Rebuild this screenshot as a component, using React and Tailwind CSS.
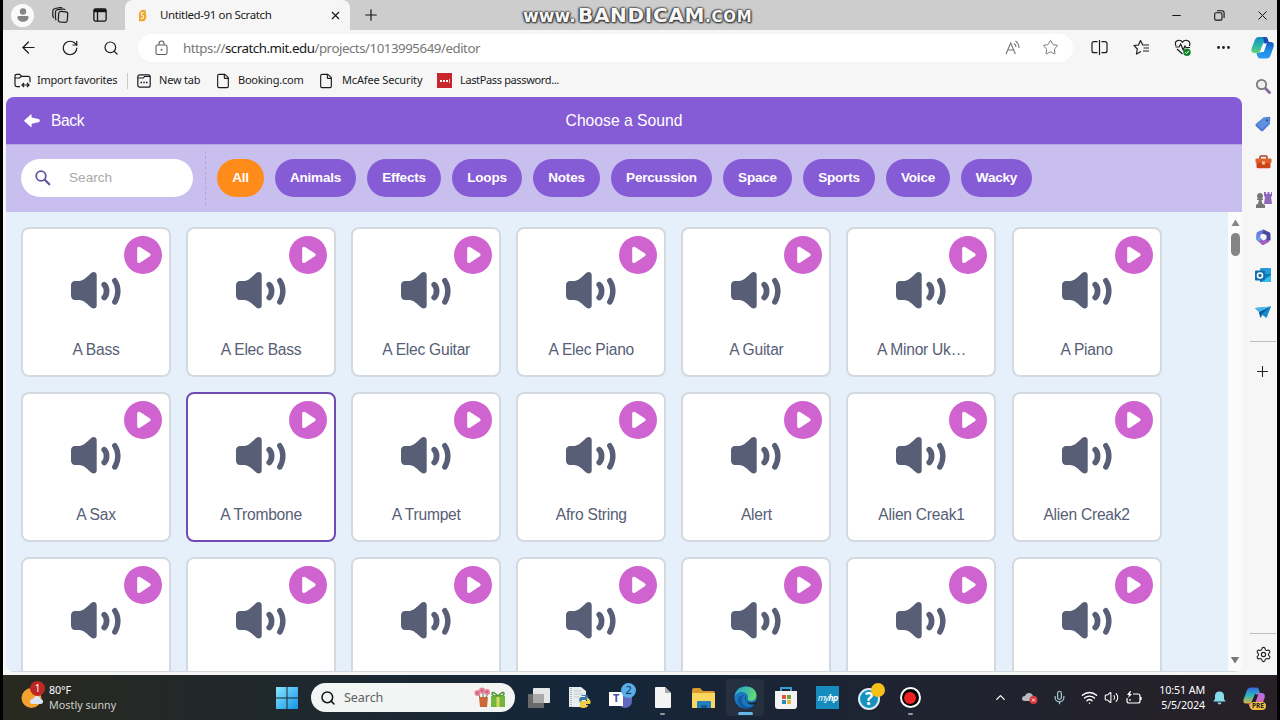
import { ArrowLeft, RotateCw, Search, Star, X, Plus, Minus, Ellipsis, Settings, ChevronUp, Mic, Wifi, Volume2, File } from 'lucide-react'

const categories = [
    { name: 'All', width: 'w-[47px]', active: true },
    { name: 'Animals', width: 'w-[81px]' },
    { name: 'Effects', width: 'w-[74px]' },
    { name: 'Loops', width: 'w-[70px]' },
    { name: 'Notes', width: 'w-[67px]' },
    { name: 'Percussion', width: 'w-[101px]' },
    { name: 'Space', width: 'w-[69px]' },
    { name: 'Sports', width: 'w-[72px]' },
    { name: 'Voice', width: 'w-[64px]' },
    { name: 'Wacky', width: 'w-[71px]' },
]

const sounds = [
    'A Bass', 'A Elec Bass', 'A Elec Guitar', 'A Elec Piano', 'A Guitar', 'A Minor Uk…', 'A Piano',
    'A Sax', 'A Trombone', 'A Trumpet', 'Afro String', 'Alert', 'Alien Creak1', 'Alien Creak2',
    '', '', '', '', '', '', '',
]

function Slot({ children, className = 'w-[41.3px]' }) {
    return <div className={`flex shrink-0 items-center justify-center ${className}`}>{children}</div>
}

function TabStrip() {
    return (
        <div className="flex h-[30px] shrink-0 bg-[#cdcdcd]">
            <div className="flex w-[122px] shrink-0 items-center">
                <div className="ml-2 flex h-[23px] w-[23px] items-center justify-center rounded-full bg-[#fafafa]">
                    <svg width="12" height="14" viewBox="0 0 12 14" fill="#858585">
                        <circle cx="6" cy="3.5" r="3.2" />
                        <path d="M1.5 8h9q1 0 1 1.2C11.5 12 9 13.7 6 13.7S.5 12 .5 9.2Q.5 8 1.5 8" />
                    </svg>
                </div>
                <svg className="ml-[18px]" width="17" height="17" viewBox="0 0 17 17" fill="none" stroke="#1c1c1c" strokeWidth="1.2">
                    <rect x="6.5" y="4.6" width="9" height="10.6" rx="2" transform="rotate(4 11 10)" />
                    <path d="M4.3 13.2Q3.5 12.5 3.5 11V5q0-2 2-2.3l6-.7q1 0 1.7.8M1.8 11Q.8 10 .8 8.6V4q0-2 2.2-2.5l5.5-1q1 0 1.6.6" />
                </svg>
                <svg className="ml-[24px]" width="14" height="14" viewBox="0 0 14 14" fill="none" stroke="#111" strokeWidth="1.3">
                    <rect x=".9" y=".9" width="12.2" height="12.2" rx="1.5" />
                    <path d="M1 2.7h12" strokeWidth="3" />
                    <path d="M4.5 3v10" />
                </svg>
            </div>
            <div className="flex w-[225px] shrink-0 items-center rounded-t-lg bg-[#f6f6f6]">
                <svg className="ml-[13px]" width="9" height="13" viewBox="0 0 9 13">
                    <path d="M3 1.5Q5 0 7.8 1.4V5Q9 6 8 9.4 7 12.6 3.5 12.3H1V8.4Q0 4 3 1.5" fill="#eda62f" />
                    <path d="M6 4Q3.5 2.6 3.2 5q0 1.2 1.8 1.7Q6.3 8 4.8 9.3 3.8 10 2.8 9" fill="none" stroke="#fff1d0" strokeWidth="1.2" />
                </svg>
                <span className="ml-[13px] w-[160px] text-[11.5px] tracking-[-0.38px] whitespace-nowrap text-[#1b1b1b]">Untitled-91 on Scratch</span>
                <X className="ml-[9px] text-[#111]" size={13} strokeWidth={2} />
            </div>
            <Slot className="w-[41px]"><Plus className="text-[#161616]" size={18} strokeWidth={1.6} /></Slot>
            {/* Recorder watermark */}
            <div className="ml-[132px] flex w-[232px] items-baseline font-['DejaVu_Sans'] leading-[31px] font-bold whitespace-nowrap text-[#f7f7f7] [text-shadow:0_0_2px_#333,0_0_2px_#333,1px_1px_2px_#333,-1px_0_2px_#333]">
                <span className="w-[55px] text-[17px] tracking-[0.1px]">www.</span>
                <span className="w-[127px] text-[20px] tracking-[0.7px]">BANDICAM</span>
                <span className="text-[15px] tracking-[0.8px]">.COM</span>
            </div>
            <div className="ml-auto flex items-center text-[#151515]">
                <Slot className="w-[43px]"><Minus size={13} strokeWidth={2} /></Slot>
                <Slot className="w-[43px]">
                    <svg width="11" height="11" viewBox="0 0 11 11" fill="none" stroke="currentColor" strokeWidth="1.1">
                        <rect x=".7" y="2.8" width="7.3" height="7.3" rx="1.3" />
                        <path d="M3 .8h5q2.1 0 2.1 2.1V8" />
                    </svg>
                </Slot>
                <Slot className="mr-[7px] ml-[14px] w-[15px]"><X className="shrink-0" size={15} strokeWidth={1.6} /></Slot>
            </div>
        </div>
    )
}

function CopilotLogo({ size = 23 }) {
    return (
        <svg width={size} height={size} viewBox="0 0 23 23">
            <defs>
                <linearGradient id="copA" x2="0" y2="1"><stop stopColor="#1687c9" /><stop offset=".55" stopColor="#28b7aa" /><stop offset="1" stopColor="#68d06f" /></linearGradient>
                <linearGradient id="copB" x2="0" y2="1"><stop stopColor="#1e56bd" /><stop offset=".5" stopColor="#1b8de8" /><stop offset="1" stopColor="#2e9cf0" /></linearGradient>
            </defs>
            <path d="M7.5 1H14q2 0 2.6 2l1 4-5.6.5-3.5 9.5H3.5Q-.5 17 .6 12.5L4 3.5Q5 1 7.5 1" fill="url(#copA)" />
            <path d="M13.5 6H19.5q4 0 3.2 4.5l-3 8.5q-1 3.500-4.5 3.500H9q-2 0-2.8-3L5.5 17h3q1.5 0 2-2z" fill="url(#copB)" />
            <path d="M12.5 7.5h3.3l-3 8.5H9.3z" fill="#f5fbff" />
            <path d="M12 1h3q1.300.3 1.8 2l.9 3.2h-4.5z" fill="#174bae" />
        </svg>
    )
}

function Toolbar() {
    return (
        <div className="flex h-[35px] shrink-0 items-center pl-[5px] text-[#1c1c1c]">
            <Slot><ArrowLeft size={19} strokeWidth={1.5} /></Slot>
            <Slot><RotateCw size={18} strokeWidth={1.6} /></Slot>
            <Slot><Search size={16} strokeWidth={1.8} /></Slot>
            <div className="ml-[6px] flex h-[28px] w-[935px] items-center rounded-full bg-white">
                <svg className="ml-[17px]" width="13" height="16" viewBox="0 0 13 16" fill="none" stroke="#606060" strokeWidth="1.1">
                    <rect x="1" y="5" width="11" height="9.5" rx="1.5" />
                    <path d="M4 5V3.5Q4 1 6.5 1T9 3.5V5" />
                    <circle cx="6.5" cy="9.7" r=".4" />
                </svg>
                <span className="ml-[15px] pt-[2px] text-[13.3px] tracking-[-0.47px] whitespace-nowrap text-[#777]">https://<span className="text-[#161616]">scratch.mit.edu</span>/projects/1013995649/editor</span>
                <svg className="mr-[21px] ml-auto" width="16" height="16" viewBox="0 0 16 16" fill="none" stroke="#777" strokeWidth="1.1">
                    <path d="M1 14 5.7 3 10.4 14M2.7 10h6M9 3.5Q11 5 11 7M10.5 1Q14 3.5 14 8" />
                </svg>
                <Star className="mr-[14px] text-[#777]" size={17} strokeWidth={1.4} />
            </div>
            <Slot className="ml-[6px] w-[42px]">
                <svg width="17" height="17" viewBox="0 0 17 17" fill="none" stroke="currentColor" strokeWidth="1.2">
                    <path d="M6.5 2.7H3q-2 0-2 2v7q0 2 2 2h3.5M10.5 2.7H14q2 0 2 2v7q0 2-2 2h-3.5M8.5 1v15" />
                </svg>
            </Slot>
            <Slot className="w-[42px]">
                <svg width="17" height="17" viewBox="0 0 17 17" fill="none" stroke="currentColor" strokeWidth="1.2">
                    <path d="M8 12.5 3.5 15l.8-5L1 6.7l4.5-.7 2-4.5L9.8 6H16M10.5 9H16M10 12h6" strokeLinejoin="round" />
                </svg>
            </Slot>
            <Slot className="w-[41px]">
                <svg width="18" height="18" viewBox="0 0 18 18" fill="none" stroke="currentColor" strokeWidth="1.2">
                    <path d="M2 7Q0 2 4.5 1.3 7 1 8.5 3.2 10 1 12.5 1.3 17 2 15.5 7M1.5 8H5l1.7-3 2.5 6L11 7l1 1.5h4M3 10l5.5 5" />
                    <circle cx="13" cy="13.2" r="3.7" fill="#11842b" stroke="none" />
                    <path d="m11.2 13.3 1.3 1.2 2.3-2.6" stroke="#fff" strokeWidth="1" />
                </svg>
            </Slot>
            <Slot className="w-[40px]"><Ellipsis size={17} strokeWidth={2} /></Slot>
            <Slot className="ml-auto w-[29px]"><CopilotLogo /></Slot>
        </div>
    )
}

function Bookmarks() {
    return (
        <div className="flex h-[32px] shrink-0 items-center pb-px pl-[11px] text-[11px] tracking-[-0.22px] whitespace-nowrap text-[#1b1b1b]">
            <svg width="17" height="16" viewBox="0 0 17 16" fill="none" stroke="currentColor" strokeWidth="1.2">
                <path d="M6 13.7H3q-2 0-2-2V3q0-1.7 1.7-1.7h3l2 2H14q2 0 2 2v4M1 5h4.5l2-1.7M8 12h7M10 10l-2 2 2 2M13 10l2 2-2 2" />
            </svg>
            <span className="ml-[6px] w-[90px]">Import favorites</span>
            <div className="h-[16px] w-px bg-[#c9c9c9]" />
            <svg className="ml-[9px]" width="14" height="14" viewBox="0 0 14 14" fill="none" stroke="currentColor" strokeWidth="1.2">
                <rect x=".8" y=".8" width="12.4" height="12.4" rx="2" />
                <path d="M1 4h5.5l1-1.5h5.5" />
                <path d="M3.5 8.5h1.5M6.3 8.5h1.5M9 8.5h1.5" strokeWidth="1.7" />
            </svg>
            <span className="ml-[8px] w-[56px]">New tab</span>
            <File size={16} strokeWidth={1.7} />
            <span className="ml-[7px] w-[80px]">Booking.com</span>
            <File size={16} strokeWidth={1.7} />
            <span className="ml-[8px] w-[95px] tracking-[-0.15px]">McAfee Security</span>
            <div className="flex h-[15px] w-[15px] items-center justify-center gap-[1px] bg-[#c9252b]">
                <i className="h-[2px] w-[2px] bg-white" /><i className="h-[2px] w-[2px] bg-white" /><i className="h-[2px] w-[2px] bg-white" /><i className="h-[4px] w-px bg-white/70" />
            </div>
            <span className="ml-[8px] tracking-[-0.36px]">LastPass password...</span>
        </div>
    )
}

function SoundCard({ name, active }) {
    return (
        <div className={`relative flex h-[150px] flex-col items-center rounded-lg border-2 bg-white ${active ? 'border-[#714bb4]' : 'border-[#d4d9df]'}`}>
            <svg className="mt-[43px] shrink-0" width="50" height="37" viewBox="0 0 50 37">
                <path d="M4 9h4c5 0 8.5-5 12.5-8.2 2.2-1.6 5.2-.5 5.2 2.2v30.5c0 2.7-3 3.8-5.2 2.2C16.5 32.5 13 28 8 28H4c-2.5 0-4-2-4-4.5V13c0-2 1.5-4 4-4" fill="#575e75" />
                <path d="M33.3 12.8C36.3 15.5 36.3 22.5 33.3 25.500" fill="none" stroke="#575e75" strokeWidth="5.8" strokeLinecap="round" />
                <path d="M43.8 8.7C47.900 14.500 47.900 23.500 43.800 30" fill="none" stroke="#575e75" strokeWidth="5.4" strokeLinecap="round" />
            </svg>
            <span className="mt-[31px] text-[15.6px] leading-5 tracking-[-0.25px] text-[#575e75]">{name}</span>
            <div className="absolute top-[7px] right-[7px] flex h-[38px] w-[38px] items-center justify-center rounded-full bg-[#cf63cf]">
                <svg className="ml-px" width="16" height="18" viewBox="0 0 16 18" fill="#fff">
                    <path d="M1.2 2.5C1.2 1 2.5.2 4 1l9.7 6.2q2 1.5 0 3L4 16.7c-1.5.9-2.8 0-2.8-1.5z" />
                </svg>
            </div>
        </div>
    )
}

function SoundLibrary() {
    return (
        <div className="mr-[1px] ml-[3px] flex h-[575px] flex-col overflow-hidden rounded-lg bg-[#e6f0fa] font-['Liberation_Sans',sans-serif]">
            <div className="relative flex h-[47px] shrink-0 items-center bg-[#855cd6] text-white">
                <svg className="ml-[18px]" width="16" height="14" viewBox="0 0 16 14">
                    <path d="M.4 6.3 6.8.4q.8-.5.8.5v2.7l7 1.5q1.2.3 1.2 1.6t-1.2 1.6l-7 1.5v2.7q0 1-.8.5L.4 7.3Q0 6.8.4 6.3" fill="#fff" />
                </svg>
                <span className="ml-[11px] pt-px text-[15.6px] tracking-[-0.35px]">Back</span>
                <span className="absolute inset-x-0 text-center text-[15.7px]">Choose a Sound</span>
            </div>
            <div className="flex h-[68px] shrink-0 items-center border-t border-[#b8a6e4] bg-[#c8bfee] pb-[2px] pl-[15px]">
                <div className="flex h-[38px] w-[172px] items-center rounded-full bg-white">
                    <svg className="ml-[14px]" width="16" height="16" viewBox="0 0 16 16" fill="none" stroke="#65549f" strokeLinecap="round">
                        <circle cx="6" cy="6" r="4.8" strokeWidth="1.8" />
                        <path d="m9.8 9.8 4.5 4.5" strokeWidth="2.2" />
                    </svg>
                    <span className="ml-[18px] pt-[2px] text-[13.6px] text-[#aaa]">Search</span>
                </div>
                <div className="ml-[12px] h-[54px] border-l border-dashed border-[#b2a4dc]" />
                <div className="ml-[11px] flex gap-[11px]">
                    {categories.map((c) => (
                        <div key={c.name} className={`flex h-[38px] items-center justify-center rounded-full pt-[2px] text-[13.5px] font-bold tracking-[-0.2px] text-white ${c.width} ${c.active ? 'bg-[#ff8c1a]' : 'bg-[#855cd6]'}`}>
                            {c.name}
                        </div>
                    ))}
                </div>
            </div>
            <div className="flex min-h-0 flex-1 border-b border-[#d5d9de]">
                <div className="grid flex-1 grid-cols-[repeat(7,150px)] content-start gap-x-[15.1px] gap-y-[15px] overflow-hidden pt-[15px] pl-[15px]">
                    {sounds.map((name, i) => <SoundCard key={i} name={name} active={i === 8} />)}
                </div>
                <div className="flex w-[14px] flex-col items-center bg-[#fbfbfb] pt-[7px] pb-[7px]">
                    <svg width="9" height="8" viewBox="0 0 9 8"><path d="M4.5.5 8.5 7h-8z" fill="#858585" /></svg>
                    <div className="mt-[6px] h-[23px] w-[9px] rounded-full bg-[#858585]" />
                    <svg className="mt-auto" width="10" height="8" viewBox="0 0 9 8"><path d="M4.5 7.5 8.7 1H.3z" fill="#777" /></svg>
                </div>
            </div>
        </div>
    )
}

function Sidebar() {
    return (
        <div className="flex w-[34px] shrink-0 flex-col items-center pt-[3px] pl-[6px]">
            <Slot className="h-[37.6px]">
                <svg width="17" height="17" viewBox="0 0 17 17" fill="none"><path d="m10 10 4.5 4.5" stroke="#8570a8" strokeWidth="3" strokeLinecap="round" /><circle cx="6.5" cy="6.5" r="4.7" fill="#eceef2" stroke="#777" strokeWidth="1.7" /></svg>
            </Slot>
            <Slot className="h-[37.6px]">
                <svg width="16" height="16" viewBox="0 0 16 16"><path d="M8.5 1.5 14 .8q1.3 0 1.3 1.3l-.5 6L8 15q-1 .8-2 0L.8 10q-.8-1 0-2z" fill="#4b7bd0" /><path d="m8.5 2.5 5-.7q1 0 .8 1l-.5 4.5L7 13 2 8.5z" fill="#6090df" /><circle cx="12" cy="4.3" r="1" fill="#243e70" /></svg>
            </Slot>
            <Slot className="h-[37.6px]">
                <svg width="17" height="14" viewBox="0 0 17 14"><path d="M5 4V2q0-1 1-1h5q1 0 1 1v2" fill="none" stroke="#a63e20" strokeWidth="1.5" /><rect x=".5" y="3.5" width="16" height="4.5" rx="1" fill="#e0602c" /><path d="M1.5 8h14v4q0 1.3-1.5 1.3H3q-1.5 0-1.5-1.3z" fill="#ca4319" /><rect x="7.2" y="6.5" width="2.6" height="3" fill="#ffd1a0" /></svg>
            </Slot>
            <Slot className="h-[37.6px]">
                <svg width="17" height="18" viewBox="0 0 17 18"><path d="M9 1h2v2h1.5V1h2v2H16V1h1v4l-1 1 1 7H9l1-7-1-1z" fill="#8f68bc" /><path d="M1 17v-3l2-1.5L4 9H2V7.5h1.5a3 3 0 1 1 3 0H8V9H6.5l.8 3.5L10 14v3z" fill="#777" /></svg>
            </Slot>
            <Slot className="h-[37.6px]">
                <svg width="17" height="18" viewBox="0 0 17 18" fill="none" strokeWidth="4" strokeLinejoin="round"><path d="M9.5 3 3.5 5.500 3 11" stroke="#6d7bdc" /><path d="m2.500 10 5.500 5 5.500-3" stroke="#a060c4" /><path d="m8 3.500 5.500 2.500v6.500" stroke="#474a9c" /><path d="m2.500 9.500 2.500 3" stroke="#62a5e8" /></svg>
            </Slot>
            <Slot className="h-[37.6px]">
                <svg width="16" height="16" viewBox="0 0 16 16"><rect x="5" y="1" width="11" height="13" rx="1" fill="#269bd7" /><path d="M5 7h11v8H5z" fill="#087bb9" /><path d="m7 14 9-6v7H7z" fill="#39bce9" /><rect y="3.5" width="10" height="10" rx="1" fill="#126da9" /><circle cx="5" cy="8.5" r="2.5" fill="none" stroke="#fff" strokeWidth="1.6" /></svg>
            </Slot>
            <Slot className="h-[37.6px]">
                <svg width="16" height="13" viewBox="0 0 16 13"><path d="M0 2 16 .5 11.5 12 7.5 9 5.5 12 4 6z" fill="#168bca" /><path d="M4 6 16 .5 6.5 8l-1 4z" fill="#095a96" /><path d="M0 2 16 .5 4 6z" fill="#49b5e5" /></svg>
            </Slot>
            <div className="mt-[10px] h-px w-[26px] bg-[#bdbdbd]" />
            <Plus className="mt-[21px] mr-px text-[#222]" size={17} strokeWidth={1.5} />
            <div className="mt-auto h-px w-[26px] bg-[#bdbdbd]" />
            <Settings className="mt-[12px] mb-[12px] text-[#222]" size={17} strokeWidth={1.6} />
        </div>
    )
}

function Taskbar() {
    return (
        <div className="flex h-[45px] shrink-0 items-center bg-linear-to-r from-[#29291f] via-[#14263a] via-45% to-[#272027] text-white">
            <div className="relative ml-[18px] h-[30px] w-[28px] shrink-0">
                <svg width="24" height="28" viewBox="0 0 24 28"><circle cx="10.5" cy="15" r="10" fill="#f3a12f" /><path d="M12 21q-3 0-3-2.5T12 16q1-3 4-3t3.5 3Q22 16 22 18.5T19.5 21z" fill="#dce5f5" /></svg>
                <div className="absolute -top-[2px] left-[9px] flex h-[15px] w-[15px] items-center justify-center rounded-full bg-[#bd2823] text-[10px]">1</div>
            </div>
            <div className="w-[224px] shrink-0 text-[10.7px] leading-[15px] whitespace-nowrap">
                <div className="tracking-[-0.1px]">80°F</div>
                <div className="tracking-[0.06px] text-[#d0d0cb]">Mostly sunny</div>
            </div>
            <svg className="ml-[3px] shrink-0" width="22" height="22" viewBox="0 0 22 22"><defs><linearGradient id="win" x2="1" y2="1"><stop stopColor="#87e5ff" /><stop offset="1" stopColor="#1694e5" /></linearGradient></defs><path d="M0 0h10.5v10.5H0zM11.5 0H22v10.5H11.5zM0 11.5h10.5V22H0zM11.5 11.5H22V22H11.5z" fill="url(#win)" /></svg>
            <div className="ml-[13px] flex h-[29px] w-[204px] shrink-0 items-center rounded-full bg-[#f3f5f5]">
                <Search className="ml-[9px] text-[#161616]" size={16} strokeWidth={2.3} />
                <span className="ml-[8px] pt-px text-[12.6px] tracking-[-0.1px] text-[#606060]">Search</span>
                <svg className="mr-[9px] ml-auto" width="32" height="21" viewBox="0 0 32 21">
                    <path d="m7 12-4-7M9 12V4M11 12l4-7" stroke="#497b42" />
                    <g fill="#e7839c"><circle cx="3.5" cy="6" r="3" /><circle cx="8" cy="3.5" r="3" /><circle cx="13" cy="5" r="3" /></g>
                    <g fill="#c64c72"><circle cx="3.5" cy="6" r="1" /><circle cx="8" cy="3.5" r="1" /><circle cx="13" cy="5" r="1" /></g>
                    <path d="M5 10h9l-1 10H6z" fill="#cc6837" />
                    <path d="M17 9h14v11H17z" fill="#74b53c" /><path d="M22.5 9h3v11h-3z" fill="#d9da65" /><path d="M24 9q-6-6-6-2 0 2 6 2 6-6 6-2 0 2-6 2" fill="none" stroke="#4f962f" strokeWidth="1.5" />
                </svg>
            </div>
            <Slot className="ml-[3px] w-[41.3px]"><svg width="22" height="20" viewBox="0 0 22 20"><rect x="5" width="17" height="15" rx="1" fill="#e4e6e8" /><rect y="6" width="16" height="14" rx="1" fill="#777" opacity=".85" /><rect x="5" y="6" width="11" height="9" fill="#a9a9a9" /></svg></Slot>
            <Slot>
                <svg width="22" height="22" viewBox="0 0 22 22"><path d="M0 0h12l5 4v16H0z" fill="#e8eced" /><path d="M2 1v19" stroke="#77888b" strokeDasharray="1 1" /><path d="M5 4h7M5 7h9M5 10h5" stroke="#bac9ce" /><path d="M15 8q4-1 4 2v3h-5q-2 0-2 3h-1q-2-5 1-6h4v-1h-4q0-1 3-1" fill="#3978a9" /><path d="M14 21q-4 0-3-3v-2q0-2 2-2h5v-3h1q4 3 2 6h-5v1h3q0 3-5 3" fill="#f1cf46" /></svg>
            </Slot>
            <Slot>
                <div className="relative h-[30px] w-[26px]">
                    <div className="absolute top-[11px] left-[10px] h-[14px] w-[14px] rounded-b-lg bg-[#6069bd]" />
                    <div className="absolute top-[9px] left-[1px] flex h-[14px] w-[14px] items-center justify-center bg-white text-[11px] font-bold text-[#4950a4]">T</div>
                    <div className="absolute top-0 left-[13px] flex h-[15px] w-[15px] items-center justify-center rounded-full bg-[#56ade9] text-[11px] text-[#182c45]">2</div>
                </div>
            </Slot>
            <Slot className="relative h-full w-[41.3px]"><svg width="16" height="21" viewBox="0 0 16 21"><path d="M1 0h9l6 6v14q0 1-1 1H1q-1 0-1-1V1q0-1 1-1" fill="#f4f4f4" /><path d="M10 0v5q0 1 1 1h5z" fill="#aaa" /></svg><i className="absolute bottom-[5px] h-[2px] w-[5px] rounded bg-[#999]" /></Slot>
            <Slot><svg width="23" height="20" viewBox="0 0 23 20"><path d="M0 2Q0 0 2 0h6l3 3h10q2 0 2 2v15H0z" fill="#d99a2d" /><path d="M0 5h23v14q0 1-1 1H1q-1 0-1-1z" fill="#f9d65f" /><path d="M5 14q0-1 1-1h12q1 0 1 1v6H5z" fill="#237fbd" /><path d="M9 17h6v3H9z" fill="#155b91" /></svg></Slot>
            <Slot className="relative h-full w-[41.3px]">
                <div className="absolute inset-x-[2px] inset-y-[4px] rounded bg-white/5" />
                <svg className="relative" width="23" height="23" viewBox="0 0 23 23">
                    <defs><linearGradient id="edge" x2="1" y2=".4"><stop stopColor="#229cd5" /><stop offset="1" stopColor="#61d779" /></linearGradient></defs>
                    <circle cx="11.5" cy="11.5" r="11" fill="#1979bf" />
                    <path d="M.5 11C1 4.5 6 .5 12 .5c7 0 11 5 10.5 9.5-.4 4-5 6-8 4-2-1.3.7-2-1-5C11 4.5 3 5 .5 11" fill="url(#edge)" />
                    <path d="M10 9q-5 5 0 10 5 4 10.5-.3Q17 23 11.5 22.5 4 21.5 4 14q0-4 6-5" fill="#1258a3" />
                    <path d="M12 10q-2 3 1 5.5 4 2.5 8.5 0l1.500 1Q19 20 15 18 11 15.500 12 10" fill="#1b2231" />
                </svg>
                <i className="absolute bottom-[5px] h-[3px] w-[15px] rounded bg-[#65b7e8]" />
            </Slot>
            <Slot><svg width="22" height="22" viewBox="0 0 22 22"><path d="M6 5V1h10v4" fill="none" stroke="#3a9bcf" strokeWidth="2" /><path d="M0 4h22v15q0 3-3 3H3q-3 0-3-3z" fill="#f3f3f3" /><path d="M7 8h4v4H7z" fill="#e55432" /><path d="M12 8h4v4h-4z" fill="#6fa63b" /><path d="M7 13h4v4H7z" fill="#298dbb" /><path d="M12 13h4v4h-4z" fill="#e7b438" /></svg></Slot>
            <Slot><div className="flex h-[23px] w-[23px] items-center justify-center bg-[#168bbd] text-[9px] tracking-[-0.7px] italic">my<b>hp</b></div></Slot>
            <Slot>
                <div className="relative h-[30px] w-[28px]">
                    <div className="absolute top-[5px] left-[3px] flex h-[22px] w-[22px] items-center justify-center rounded-full border-2 border-[#d9edf5] bg-[#1991bf] text-[17px] font-bold">?</div>
                    <div className="absolute top-0 left-[16px] h-[14px] w-[14px] rounded-full bg-[#f5c116]" />
                </div>
            </Slot>
            <Slot className="relative h-full w-[41.3px]"><div className="flex h-[21px] w-[21px] items-center justify-center rounded-full border-2 border-white bg-black"><i className="h-[12px] w-[12px] rounded-full bg-[#ed2024]" /></div><i className="absolute bottom-[5px] h-[2px] w-[5px] rounded bg-[#999]" /></Slot>
            <div className="ml-auto flex shrink-0 items-center">
                <Slot className="w-[30px]"><ChevronUp size={15} strokeWidth={2.2} /></Slot>
                <Slot className="w-[30px]"><svg width="16" height="12" viewBox="0 0 16 12"><path d="M3 9Q0 9 0 6.5T3 4q1-3 4-3t4 3q3 0 3 3T11 9z" fill="#b8babd" /><circle cx="11.5" cy="8" r="4" fill="#dc343f" /><path d="m10 6.5 3 3m0-3-3 3" stroke="#fff" /></svg></Slot>
                <Slot className="w-[29px]"><Mic className="text-[#a9cbd1]" size={15} strokeWidth={1.9} /></Slot>
                <Slot className="w-[31px]"><Wifi size={17} strokeWidth={2} /></Slot>
                <Slot className="w-[12px]"><Volume2 className="shrink-0" size={15} strokeWidth={1.7} /></Slot>
                <Slot className="w-[34px]"><svg width="16" height="14" viewBox="0 0 16 14" fill="none" stroke="#fff" strokeWidth="1.2"><path d="M7 3h5q2 0 2 2v5q0 2-2 2H3q-2 0-2-2V7M15 6v3" /><path d="M4 0 1 4h2L2 7l4-4H4l1-3z" fill="#fff" stroke="none" /><path d="M4 10V8" /></svg></Slot>
                <div className="w-[54px] text-right text-[10.7px] leading-[15px] tracking-[-0.1px] whitespace-nowrap">
                    <div>10:51 AM</div>
                    <div>5/5/2024</div>
                </div>
                <Slot className="w-[29px]"><svg width="13" height="14" viewBox="0 0 13 14"><path d="M6.5.5Q11 .5 11 5v3l1.7 2.5H.3L2 8V5Q2 .5 6.5.5M4.5 11.5h4Q8 13.5 6.5 13.5T4.5 11.5" fill="#86dce9" /></svg></Slot>
                <div className="relative mr-[12px] ml-[9px]">
                    <svg width="22" height="22" viewBox="0 0 22 22">
                        <defs>
                            <linearGradient id="preA" x2="0" y2="1"><stop stopColor="#3268e0" /><stop offset=".5" stopColor="#2fb6bd" /><stop offset="1" stopColor="#e2b43b" /></linearGradient>
                            <linearGradient id="preB" x2="0" y2="1"><stop stopColor="#b36cf0" /><stop offset="1" stopColor="#ef6a7d" /></linearGradient>
                        </defs>
                        <path d="M7.5.5H13.5q2 0 2.5 2l1 4-5 .5-4 9.5H3.5Q-.5 17 .6 12.5L4 3Q5 .5 7.5.5" fill="url(#preA)" />
                        <path d="M13.5 6H18.5q4 0 3.2 4.5l-3 8.5q-1 3-4.5 3H9q-2 0-2.8-3l-.7-2.5h3q1.5 0 2-2z" fill="url(#preB)" />
                        <path d="M12.3 7.5h3l-3 8H9.3z" fill="#221f28" />
                    </svg>
                    <span className="absolute -right-[1px] -bottom-[1px] rounded-sm bg-[#f0bd43] px-[2px] text-[6.5px] leading-[8px] font-bold text-[#222]">PRE</span>
                </div>
            </div>
        </div>
    )
}

export default function App() {
    return (
        <div className="flex h-[720px] w-[1280px] flex-col overflow-hidden bg-black px-[3px] font-['Noto_Sans',sans-serif]">
            <TabStrip />
            <div className="flex h-[645px] shrink-0 flex-col bg-[#f6f6f6]">
                <Toolbar />
                <div className="flex min-h-0 flex-1">
                    <div className="flex w-[1240px] flex-col">
                        <Bookmarks />
                        <SoundLibrary />
                    </div>
                    <Sidebar />
                </div>
            </div>
            <Taskbar />
        </div>
    )
}
